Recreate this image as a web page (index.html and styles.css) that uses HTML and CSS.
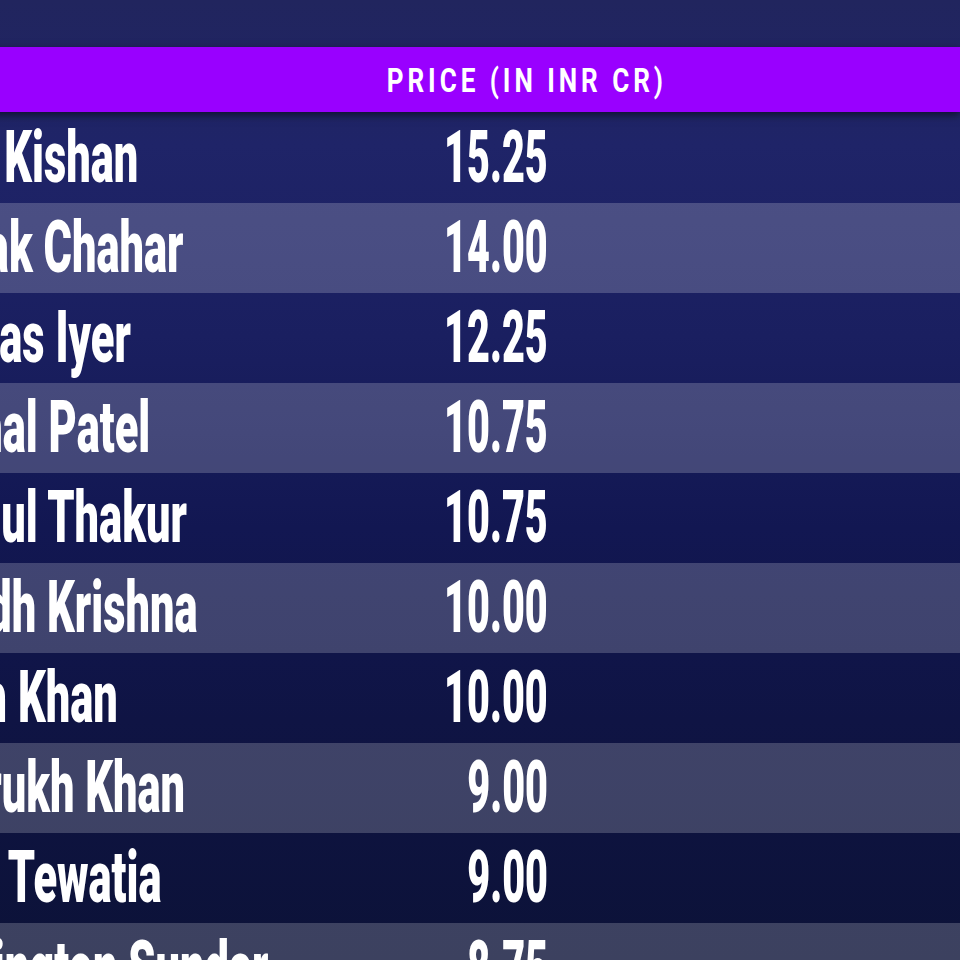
FILE: index.html
```html
<!DOCTYPE html>
<html lang="en">
<head>
<meta charset="utf-8">
<title>IPL Auction – Price List</title>
<link rel="stylesheet" href="styles.css">
</head>
<body>
<div class="page">
  <div class="table">
    <div class="head">
      <div class="cell head-spacer"></div>
      <div class="cell head-price"><span class="head-text">PRICE (IN INR CR)</span></div>
    </div>
    <div class="row"><div class="cell name-col"><span class="big name">Ishan Kishan</span></div><div class="cell price-col"><span class="big num">15.25</span></div></div>
    <div class="row alt"><div class="cell name-col"><span class="big name">Deepak Chahar</span></div><div class="cell price-col"><span class="big num">14.00</span></div></div>
    <div class="row"><div class="cell name-col"><span class="big name">Shreyas Iyer</span></div><div class="cell price-col"><span class="big num">12.25</span></div></div>
    <div class="row alt"><div class="cell name-col"><span class="big name">Harshal Patel</span></div><div class="cell price-col"><span class="big num">10.75</span></div></div>
    <div class="row"><div class="cell name-col"><span class="big name">Shardul Thakur</span></div><div class="cell price-col"><span class="big num">10.75</span></div></div>
    <div class="row alt"><div class="cell name-col"><span class="big name">Prasidh Krishna</span></div><div class="cell price-col"><span class="big num">10.00</span></div></div>
    <div class="row"><div class="cell name-col"><span class="big name">Avesh Khan</span></div><div class="cell price-col"><span class="big num">10.00</span></div></div>
    <div class="row alt"><div class="cell name-col"><span class="big name">Shahrukh Khan</span></div><div class="cell price-col"><span class="big num">9.00</span></div></div>
    <div class="row"><div class="cell name-col"><span class="big name">Rahul Tewatia</span></div><div class="cell price-col"><span class="big num">9.00</span></div></div>
    <div class="row alt"><div class="cell name-col"><span class="big name">Washington Sundar</span></div><div class="cell price-col"><span class="big num">8.75</span></div></div>
  </div>
</div>
</body>
</html>
```
FILE: styles.css
```css
html, body {
  margin: 0;
  padding: 0;
  background: #0c1236;
}

.page {
  width: 960px;
  height: 960px;
  overflow: hidden;
  background: linear-gradient(to bottom, #21255e 0%, #1f2468 15%, #1a1f60 35%, #121752 55%, #0f1444 75%, #0c1238 100%);
  font-family: Roboto, "Liberation Sans", sans-serif;
  color: #ffffff;
}

.table {
  padding-top: 47px;
  margin-left: -114px;
  width: 1074px;
}

.head {
  display: flex;
  height: 65px;
  margin-bottom: 1px;
  background: #9900ff;
  box-shadow: 0 3px 8px rgba(0, 0, 0, 0.55);
  position: relative;
  z-index: 1;
}

.head-spacer {
  flex: 0 0 416px;
}

.head-price {
  flex: 0 0 446px;
  justify-content: center;
}

.head-text {
  display: inline-block;
  flex-shrink: 0;
  font-size: 33px;
  font-weight: 700;
  letter-spacing: 5px;
  padding-left: 5px;
  transform: scaleX(0.79);
  transform-origin: center;
  margin-top: 1px;
  white-space: nowrap;
}

.row {
  display: flex;
  height: 90px;
}

.row.alt {
  background: rgba(255, 255, 255, 0.2);
}

.cell {
  display: flex;
  align-items: center;
  min-width: 0;
}

.name-col {
  flex: 0 0 316px;
}

.price-col {
  flex: 0 0 446px;
  justify-content: flex-end;
  padding-right: 100px;
  box-sizing: border-box;
}

.big {
  display: inline-block;
  flex-shrink: 0;
  font-size: 72px;
  font-weight: 900;
  line-height: 1;
  white-space: nowrap;
  margin-top: 0;
}

.name {
  transform: scaleX(0.603);
  transform-origin: left center;
}

.num {
  transform: scaleX(0.549);
  transform-origin: right center;
}
```
